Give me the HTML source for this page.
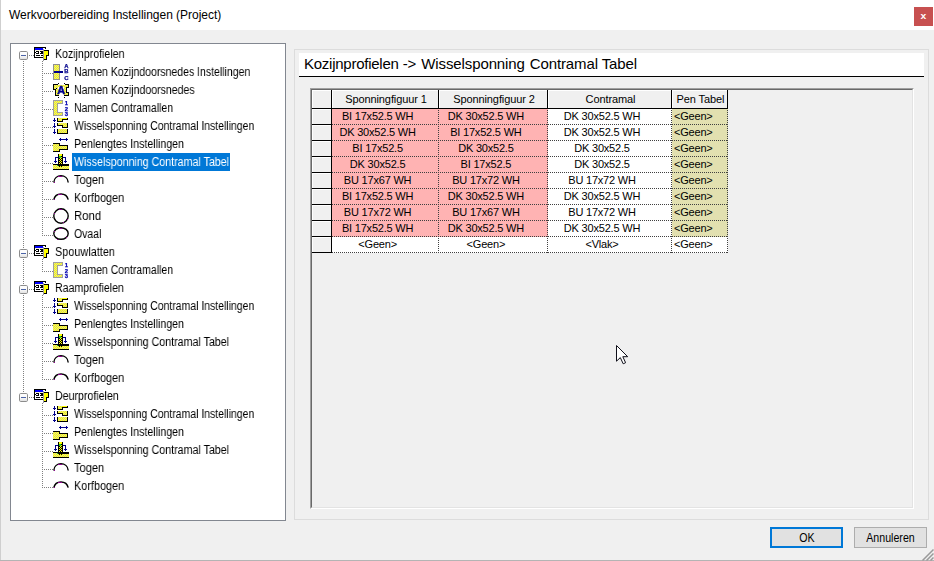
<!DOCTYPE html>
<html lang="nl"><head><meta charset="utf-8"><title>Werkvoorbereiding Instellingen (Project)</title>
<style>

html,body{margin:0;padding:0}
body{width:934px;height:561px;overflow:hidden;background:#f0f0f0;position:relative;font-family:"Liberation Sans",sans-serif;color:#000}
.abs{position:absolute}
#titlebar{left:0;top:0;width:934px;height:30px;background:#fff}
#title{left:9px;top:7px;font-size:12px;line-height:16px;white-space:nowrap;letter-spacing:-0.025px}
#close{left:914px;top:7px;width:19px;height:19px;background:#c75050;color:#fff;font-size:9px;font-weight:bold;line-height:19px;text-align:center}
#tree{left:10px;top:43px;width:274px;height:476px;border:1px solid #828790;background:#fff}
.ti{position:absolute;white-space:nowrap;font-size:12.5px;line-height:18px;height:18px;transform:scaleX(0.835);transform-origin:0 0;will-change:transform}
.sel{position:absolute;background:#0078d7;height:18px}
.ic{position:absolute;width:16px;height:16px;shape-rendering:crispEdges}
#frame{left:294px;top:49px;width:633px;height:469px;border:1px solid #dcdcdc}
#head{left:299px;top:53px;width:625px;height:23px;background:#fff;border-bottom:1px solid #000}
#headtxt{left:304px;top:55px;font-size:15px;line-height:18px;white-space:nowrap;letter-spacing:-0.115px}
#grid{left:310px;top:88px;width:602px;height:419px;background:#f0f0f0;border-style:solid;border-width:1px;border-color:#a0a0a0 #fff #fff #a0a0a0}
#grid2{left:311px;top:89px;width:600px;height:417px;border-style:solid;border-width:1px;border-color:#696969 #e3e3e3 #e3e3e3 #696969}
.gt{position:absolute;font-size:11px;line-height:15px;height:15px;white-space:nowrap}
.btn{position:absolute;box-sizing:border-box;background:#e1e1e1;text-align:center;font-size:12.5px}

</style></head><body>
<div id="titlebar" class="abs"></div>
<div id="title" class="abs">Werkvoorbereiding Instellingen (Project)</div>
<div id="close" class="abs"><span style="display:inline-block;transform:scaleX(1.15)">x</span></div>
<div class="abs" style="left:0;top:0;width:1px;height:561px;background:#cfcfcf"></div>
<div class="abs" style="left:0;top:560px;width:934px;height:1px;background:#b4b4b4"></div>
<div id="tree" class="abs"></div>
<div class="ti" style="left:55px;top:45px;transform:scaleX(0.8475)">Kozijnprofielen</div>
<div class="ti" style="left:74px;top:63px;transform:scaleX(0.8398)">Namen Kozijndoorsnedes Instellingen</div>
<div class="ti" style="left:74px;top:81px;transform:scaleX(0.8421)">Namen Kozijndoorsnedes</div>
<div class="ti" style="left:74px;top:99px;transform:scaleX(0.8384)">Namen Contramallen</div>
<div class="ti" style="left:74px;top:117px;transform:scaleX(0.8369)">Wisselsponning Contramal Instellingen</div>
<div class="ti" style="left:74px;top:135px;transform:scaleX(0.8508)">Penlengtes Instellingen</div>
<div class="sel" style="left:72px;top:153px;width:158px"></div>
<div class="ti" style="left:74px;top:153px;transform:scaleX(0.8527);color:#fff">Wisselsponning Contramal Tabel</div>
<div class="ti" style="left:74px;top:171px;transform:scaleX(0.8857)">Togen</div>
<div class="ti" style="left:74px;top:189px;transform:scaleX(0.8695)">Korfbogen</div>
<div class="ti" style="left:74px;top:207px;transform:scaleX(0.9076)">Rond</div>
<div class="ti" style="left:74px;top:225px;transform:scaleX(0.835)">Ovaal</div>
<div class="ti" style="left:55px;top:243px;transform:scaleX(0.8708)">Spouwlatten</div>
<div class="ti" style="left:74px;top:261px;transform:scaleX(0.8384)">Namen Contramallen</div>
<div class="ti" style="left:55px;top:279px;transform:scaleX(0.8464)">Raamprofielen</div>
<div class="ti" style="left:74px;top:297px;transform:scaleX(0.8369)">Wisselsponning Contramal Instellingen</div>
<div class="ti" style="left:74px;top:315px;transform:scaleX(0.8508)">Penlengtes Instellingen</div>
<div class="ti" style="left:74px;top:333px;transform:scaleX(0.8527)">Wisselsponning Contramal Tabel</div>
<div class="ti" style="left:74px;top:351px;transform:scaleX(0.8857)">Togen</div>
<div class="ti" style="left:74px;top:369px;transform:scaleX(0.8695)">Korfbogen</div>
<div class="ti" style="left:55px;top:387px;transform:scaleX(0.8487)">Deurprofielen</div>
<div class="ti" style="left:74px;top:405px;transform:scaleX(0.8369)">Wisselsponning Contramal Instellingen</div>
<div class="ti" style="left:74px;top:423px;transform:scaleX(0.8508)">Penlengtes Instellingen</div>
<div class="ti" style="left:74px;top:441px;transform:scaleX(0.8527)">Wisselsponning Contramal Tabel</div>
<div class="ti" style="left:74px;top:459px;transform:scaleX(0.8857)">Togen</div>
<div class="ti" style="left:74px;top:477px;transform:scaleX(0.8695)">Korfbogen</div>
<svg class="abs" style="left:0;top:0;shape-rendering:crispEdges" width="300" height="561" viewBox="0 0 300 561"><defs><linearGradient id="eg" x1="0" y1="0" x2="0" y2="1"><stop offset="0" stop-color="#fff"/><stop offset="0.5" stop-color="#fbfbfb"/><stop offset="1" stop-color="#dedede"/></linearGradient><pattern id="h" width="2" height="2" patternUnits="userSpaceOnUse"><rect width="2" height="2" fill="#ffff00"/><rect width="1" height="1" fill="#dcdc9c"/><rect x="1" y="1" width="1" height="1" fill="#dcdc9c"/></pattern><pattern id="hk" width="2" height="2" patternUnits="userSpaceOnUse"><rect width="2" height="2" fill="#ffff00"/><rect width="1" height="1" fill="#000"/><rect x="1" y="1" width="1" height="1" fill="#000"/></pattern></defs><line x1="23.5" y1="61" x2="23.5" y2="249" stroke="#808080" stroke-dasharray="1 1"/><line x1="23.5" y1="259" x2="23.5" y2="285" stroke="#808080" stroke-dasharray="1 1"/><line x1="23.5" y1="295" x2="23.5" y2="393" stroke="#808080" stroke-dasharray="1 1"/><line x1="29" y1="55.5" x2="34" y2="55.5" stroke="#808080" stroke-dasharray="1 1"/><line x1="42.5" y1="61" x2="42.5" y2="236" stroke="#808080" stroke-dasharray="1 1"/><line x1="44" y1="73.5" x2="53" y2="73.5" stroke="#808080" stroke-dasharray="1 1"/><line x1="44" y1="91.5" x2="53" y2="91.5" stroke="#808080" stroke-dasharray="1 1"/><line x1="44" y1="109.5" x2="53" y2="109.5" stroke="#808080" stroke-dasharray="1 1"/><line x1="44" y1="127.5" x2="53" y2="127.5" stroke="#808080" stroke-dasharray="1 1"/><line x1="44" y1="145.5" x2="53" y2="145.5" stroke="#808080" stroke-dasharray="1 1"/><line x1="44" y1="163.5" x2="53" y2="163.5" stroke="#808080" stroke-dasharray="1 1"/><line x1="44" y1="181.5" x2="53" y2="181.5" stroke="#808080" stroke-dasharray="1 1"/><line x1="44" y1="199.5" x2="53" y2="199.5" stroke="#808080" stroke-dasharray="1 1"/><line x1="44" y1="217.5" x2="53" y2="217.5" stroke="#808080" stroke-dasharray="1 1"/><line x1="44" y1="235.5" x2="53" y2="235.5" stroke="#808080" stroke-dasharray="1 1"/><rect x="19.5" y="51.5" width="8" height="8" rx="1.2" fill="url(#eg)" stroke="#8c8c8c" shape-rendering="geometricPrecision"/><rect x="21" y="55" width="5" height="1" fill="#4b63a7"/><line x1="29" y1="253.5" x2="34" y2="253.5" stroke="#808080" stroke-dasharray="1 1"/><line x1="42.5" y1="259" x2="42.5" y2="272" stroke="#808080" stroke-dasharray="1 1"/><line x1="44" y1="271.5" x2="53" y2="271.5" stroke="#808080" stroke-dasharray="1 1"/><rect x="19.5" y="249.5" width="8" height="8" rx="1.2" fill="url(#eg)" stroke="#8c8c8c" shape-rendering="geometricPrecision"/><rect x="21" y="253" width="5" height="1" fill="#4b63a7"/><line x1="29" y1="289.5" x2="34" y2="289.5" stroke="#808080" stroke-dasharray="1 1"/><line x1="42.5" y1="295" x2="42.5" y2="380" stroke="#808080" stroke-dasharray="1 1"/><line x1="44" y1="307.5" x2="53" y2="307.5" stroke="#808080" stroke-dasharray="1 1"/><line x1="44" y1="325.5" x2="53" y2="325.5" stroke="#808080" stroke-dasharray="1 1"/><line x1="44" y1="343.5" x2="53" y2="343.5" stroke="#808080" stroke-dasharray="1 1"/><line x1="44" y1="361.5" x2="53" y2="361.5" stroke="#808080" stroke-dasharray="1 1"/><line x1="44" y1="379.5" x2="53" y2="379.5" stroke="#808080" stroke-dasharray="1 1"/><rect x="19.5" y="285.5" width="8" height="8" rx="1.2" fill="url(#eg)" stroke="#8c8c8c" shape-rendering="geometricPrecision"/><rect x="21" y="289" width="5" height="1" fill="#4b63a7"/><line x1="29" y1="397.5" x2="34" y2="397.5" stroke="#808080" stroke-dasharray="1 1"/><line x1="42.5" y1="403" x2="42.5" y2="488" stroke="#808080" stroke-dasharray="1 1"/><line x1="44" y1="415.5" x2="53" y2="415.5" stroke="#808080" stroke-dasharray="1 1"/><line x1="44" y1="433.5" x2="53" y2="433.5" stroke="#808080" stroke-dasharray="1 1"/><line x1="44" y1="451.5" x2="53" y2="451.5" stroke="#808080" stroke-dasharray="1 1"/><line x1="44" y1="469.5" x2="53" y2="469.5" stroke="#808080" stroke-dasharray="1 1"/><line x1="44" y1="487.5" x2="53" y2="487.5" stroke="#808080" stroke-dasharray="1 1"/><rect x="19.5" y="393.5" width="8" height="8" rx="1.2" fill="url(#eg)" stroke="#8c8c8c" shape-rendering="geometricPrecision"/><rect x="21" y="397" width="5" height="1" fill="#4b63a7"/><g transform="translate(34 46)"><rect x="1" y="4" width="8" height="7" fill="#fff"/><rect x="0" y="1" width="12" height="1" fill="#000"/><rect x="0" y="1" width="1" height="11" fill="#000"/><rect x="0" y="11" width="9" height="1" fill="#000"/><rect x="11" y="1" width="1" height="2" fill="#000"/><rect x="1" y="2" width="9" height="2" fill="#0000ff"/><rect x="1" y="4" width="8" height="1" fill="#f4f0d8"/><rect x="2" y="5" width="3" height="1" fill="#000"/><rect x="6" y="5" width="3" height="1" fill="#000"/><rect x="1" y="6" width="1" height="1" fill="#000"/><rect x="4" y="6" width="1" height="1" fill="#000"/><rect x="7" y="6" width="2" height="1" fill="#000"/><rect x="2" y="7" width="3" height="1" fill="#000"/><rect x="6" y="7" width="3" height="1" fill="#000"/><rect x="2" y="9" width="4" height="1" fill="#000"/><rect x="7" y="9" width="2" height="1" fill="#000"/><rect x="9" y="2" width="1" height="13" fill="#9a9aa0"/><rect x="9" y="2" width="1" height="1" fill="#fff"/><rect x="10" y="5" width="4" height="4" fill="#ffff00"/><rect x="10" y="9" width="2" height="4" fill="#ffff00"/><rect x="10" y="4" width="5" height="1" fill="#000"/><rect x="14" y="4" width="1" height="6" fill="#000"/><rect x="12" y="9" width="3" height="1" fill="#000"/><rect x="12" y="9" width="1" height="5" fill="#000"/><rect x="10" y="13" width="3" height="1" fill="#000"/></g><g transform="translate(53 64)"><rect x="0" y="0" width="7" height="16" fill="#909090"/><rect x="1" y="1" width="5" height="14" fill="url(#h)"/><rect x="1" y="7" width="9" height="2" fill="#00008b"/><text x="11.3" y="4.4" font-size="5.9" font-weight="bold" fill="#00008b" stroke="#00008b" stroke-width="0.25" font-family="Liberation Sans, sans-serif">A</text><text x="11.3" y="9.3" font-size="5.9" font-weight="bold" fill="#00008b" stroke="#00008b" stroke-width="0.25" font-family="Liberation Sans, sans-serif">B</text><text x="11.3" y="15.8" font-size="5.9" font-weight="bold" fill="#00008b" stroke="#00008b" stroke-width="0.25" font-family="Liberation Sans, sans-serif">C</text></g><g transform="translate(53 82)"><rect x="1" y="3" width="4" height="4" fill="url(#h)"/><rect x="3" y="7" width="3" height="6" fill="url(#h)"/><rect x="11" y="3" width="4" height="3" fill="url(#h)"/><rect x="11" y="5" width="2" height="8" fill="url(#h)"/><rect x="13" y="11" width="2" height="2" fill="url(#h)"/><rect x="5" y="3" width="6" height="2" fill="url(#h)"/><text x="4.3" y="12" font-size="10.8" font-weight="bold" fill="#00008b" stroke="#00008b" stroke-width="0.5" font-family="Liberation Sans, sans-serif">A</text><rect x="0" y="2" width="5" height="1" fill="#000"/><rect x="0" y="2" width="1" height="6" fill="#000"/><rect x="0" y="7" width="3" height="1" fill="#000"/><rect x="2" y="7" width="1" height="7" fill="#000"/><rect x="2" y="13" width="4" height="1" fill="#000"/><rect x="12" y="2" width="4" height="1" fill="#000"/><rect x="15" y="2" width="1" height="4" fill="#000"/><rect x="13" y="5" width="3" height="1" fill="#000"/><rect x="13" y="5" width="1" height="6" fill="#000"/><rect x="13" y="10" width="3" height="1" fill="#000"/><rect x="15" y="10" width="1" height="4" fill="#000"/><rect x="11" y="13" width="5" height="1" fill="#000"/><rect x="5" y="1" width="1" height="1" fill="#000"/><rect x="11" y="1" width="1" height="1" fill="#000"/><rect x="5" y="15" width="1" height="1" fill="#000"/><rect x="11" y="15" width="1" height="1" fill="#000"/><rect x="3" y="6" width="1" height="1" fill="#000"/></g><g transform="translate(53 100)"><rect x="0" y="0" width="10" height="16" fill="#a0a0a0"/><rect x="1" y="1" width="8" height="14" fill="url(#h)"/><rect x="4" y="3" width="6" height="10" fill="#a0a0a0"/><rect x="5" y="4" width="5" height="8" fill="#fff"/><text x="11.8" y="5.0" font-size="5.9" font-weight="bold" fill="#0000b0" stroke="#0000b0" stroke-width="0.25" font-family="Liberation Sans, sans-serif">1</text><text x="11.8" y="10.8" font-size="5.9" font-weight="bold" fill="#0000b0" stroke="#0000b0" stroke-width="0.25" font-family="Liberation Sans, sans-serif">2</text><text x="11.8" y="16.2" font-size="5.9" font-weight="bold" fill="#0000b0" stroke="#0000b0" stroke-width="0.25" font-family="Liberation Sans, sans-serif">3</text></g><g transform="translate(53 118)"><rect x="1" y="0" width="1" height="4" fill="#00008b"/><rect x="0" y="2" width="3" height="1" fill="#00008b"/><rect x="1" y="5" width="1" height="5" fill="#00008b"/><rect x="0" y="8" width="3" height="1" fill="#00008b"/><rect x="1" y="11" width="1" height="5" fill="#00008b"/><rect x="0" y="14" width="3" height="1" fill="#00008b"/><rect x="5" y="0" width="4" height="3" fill="url(#h)"/><rect x="9" y="0" width="5" height="1" fill="#ffff00"/><rect x="4" y="0" width="1" height="4" fill="#000"/><rect x="4" y="3" width="6" height="1" fill="#000"/><rect x="9" y="1" width="1" height="3" fill="#000"/><rect x="9" y="1" width="6" height="1" fill="#000"/><rect x="14" y="0" width="1" height="2" fill="#000"/><rect x="5" y="5" width="9" height="2" fill="url(#h)"/><rect x="10" y="7" width="4" height="2" fill="url(#h)"/><rect x="4" y="5" width="1" height="3" fill="#000"/><rect x="4" y="7" width="6" height="1" fill="#000"/><rect x="9" y="7" width="1" height="3" fill="#000"/><rect x="9" y="9" width="6" height="1" fill="#000"/><rect x="14" y="5" width="1" height="5" fill="#000"/><rect x="5" y="11" width="9" height="4" fill="url(#h)"/><rect x="4" y="11" width="1" height="5" fill="#000"/><rect x="4" y="15" width="11" height="1" fill="#000"/><rect x="14" y="11" width="1" height="5" fill="#000"/></g><g transform="translate(53 136)"><rect x="6" y="3" width="9" height="1" fill="#00008b"/><rect x="7" y="2" width="1" height="3" fill="#00008b"/><rect x="13" y="2" width="1" height="3" fill="#00008b"/><rect x="0" y="8" width="6" height="7" fill="url(#h)"/><rect x="6" y="10" width="8" height="3" fill="url(#h)"/><rect x="0" y="7" width="7" height="1" fill="#000"/><rect x="6" y="7" width="1" height="3" fill="#000"/><rect x="6" y="9" width="9" height="1" fill="#000"/><rect x="14" y="9" width="1" height="5" fill="#000"/><rect x="6" y="13" width="9" height="1" fill="#000"/><rect x="6" y="13" width="1" height="3" fill="#000"/><rect x="0" y="15" width="7" height="1" fill="#000"/></g><g transform="translate(53 154)"><rect x="6" y="0" width="3" height="11" fill="url(#hk)"/><rect x="6" y="0" width="3" height="2" fill="#ffff00"/><rect x="6" y="2" width="2" height="2" fill="#20d020"/><rect x="5" y="0" width="1" height="11" fill="#000"/><rect x="9" y="0" width="1" height="11" fill="#000"/><rect x="0" y="11" width="16" height="4" fill="url(#h)"/><rect x="0" y="10" width="16" height="1" fill="#000"/><rect x="10" y="11" width="6" height="1" fill="#000"/><rect x="5" y="11" width="5" height="1" fill="#000"/><rect x="6" y="12" width="1" height="1" fill="#000"/><rect x="8" y="12" width="1" height="1" fill="#000"/><rect x="4" y="11" width="1" height="1" fill="#20d020"/><rect x="0" y="15" width="16" height="1" fill="#000"/><rect x="2" y="3" width="3" height="1" fill="#00008b"/><rect x="2" y="3" width="1" height="6" fill="#00008b"/><rect x="1" y="7" width="3" height="1" fill="#00008b"/><rect x="10" y="3" width="3" height="1" fill="#00008b"/><rect x="12" y="3" width="1" height="6" fill="#00008b"/><rect x="11" y="7" width="3" height="1" fill="#00008b"/></g><g transform="translate(53 172)"><path d="M0.8 10.5 C1.2 1.6 14.8 1.6 15.2 10.5" fill="none" stroke="#000" stroke-width="1.45" shape-rendering="auto"/><rect x="5" y="4" width="4" height="1" fill="#900090"/><rect x="1" y="10" width="1" height="1" fill="#900090"/></g><g transform="translate(53 190)"><path d="M0.8 9.6 C2.5 2 13.5 2 15.2 9.6" fill="none" stroke="#000" stroke-width="1.45" shape-rendering="auto"/><rect x="5" y="4" width="4" height="1" fill="#900090"/><rect x="1" y="9" width="1" height="1" fill="#900090"/></g><g transform="translate(53 208)"><circle cx="8" cy="8" r="7.2" fill="none" stroke="#000" stroke-width="1.4" shape-rendering="auto"/><rect x="6" y="1" width="3" height="1" fill="#900090"/><rect x="1" y="5" width="1" height="1" fill="#900090"/><rect x="14" y="11" width="1" height="1" fill="#900090"/><rect x="10" y="14" width="1" height="1" fill="#900090"/></g><g transform="translate(53 226)"><ellipse cx="8" cy="7.5" rx="7.2" ry="5.8" fill="none" stroke="#000" stroke-width="1.4" shape-rendering="auto"/><rect x="6" y="2" width="3" height="1" fill="#900090"/><rect x="1" y="5" width="1" height="1" fill="#900090"/><rect x="13" y="11" width="1" height="1" fill="#900090"/><rect x="4" y="13" width="1" height="1" fill="#900090"/></g><g transform="translate(34 244)"><rect x="1" y="4" width="8" height="7" fill="#fff"/><rect x="0" y="1" width="12" height="1" fill="#000"/><rect x="0" y="1" width="1" height="11" fill="#000"/><rect x="0" y="11" width="9" height="1" fill="#000"/><rect x="11" y="1" width="1" height="2" fill="#000"/><rect x="1" y="2" width="9" height="2" fill="#0000ff"/><rect x="1" y="4" width="8" height="1" fill="#f4f0d8"/><rect x="2" y="5" width="3" height="1" fill="#000"/><rect x="6" y="5" width="3" height="1" fill="#000"/><rect x="1" y="6" width="1" height="1" fill="#000"/><rect x="4" y="6" width="1" height="1" fill="#000"/><rect x="7" y="6" width="2" height="1" fill="#000"/><rect x="2" y="7" width="3" height="1" fill="#000"/><rect x="6" y="7" width="3" height="1" fill="#000"/><rect x="2" y="9" width="4" height="1" fill="#000"/><rect x="7" y="9" width="2" height="1" fill="#000"/><rect x="9" y="2" width="1" height="13" fill="#9a9aa0"/><rect x="9" y="2" width="1" height="1" fill="#fff"/><rect x="10" y="5" width="4" height="4" fill="#ffff00"/><rect x="10" y="9" width="2" height="4" fill="#ffff00"/><rect x="10" y="4" width="5" height="1" fill="#000"/><rect x="14" y="4" width="1" height="6" fill="#000"/><rect x="12" y="9" width="3" height="1" fill="#000"/><rect x="12" y="9" width="1" height="5" fill="#000"/><rect x="10" y="13" width="3" height="1" fill="#000"/></g><g transform="translate(53 262)"><rect x="0" y="0" width="10" height="16" fill="#a0a0a0"/><rect x="1" y="1" width="8" height="14" fill="url(#h)"/><rect x="4" y="3" width="6" height="10" fill="#a0a0a0"/><rect x="5" y="4" width="5" height="8" fill="#fff"/><text x="11.8" y="5.0" font-size="5.9" font-weight="bold" fill="#0000b0" stroke="#0000b0" stroke-width="0.25" font-family="Liberation Sans, sans-serif">1</text><text x="11.8" y="10.8" font-size="5.9" font-weight="bold" fill="#0000b0" stroke="#0000b0" stroke-width="0.25" font-family="Liberation Sans, sans-serif">2</text><text x="11.8" y="16.2" font-size="5.9" font-weight="bold" fill="#0000b0" stroke="#0000b0" stroke-width="0.25" font-family="Liberation Sans, sans-serif">3</text></g><g transform="translate(34 280)"><rect x="1" y="4" width="8" height="7" fill="#fff"/><rect x="0" y="1" width="12" height="1" fill="#000"/><rect x="0" y="1" width="1" height="11" fill="#000"/><rect x="0" y="11" width="9" height="1" fill="#000"/><rect x="11" y="1" width="1" height="2" fill="#000"/><rect x="1" y="2" width="9" height="2" fill="#0000ff"/><rect x="1" y="4" width="8" height="1" fill="#f4f0d8"/><rect x="2" y="5" width="3" height="1" fill="#000"/><rect x="6" y="5" width="3" height="1" fill="#000"/><rect x="1" y="6" width="1" height="1" fill="#000"/><rect x="4" y="6" width="1" height="1" fill="#000"/><rect x="7" y="6" width="2" height="1" fill="#000"/><rect x="2" y="7" width="3" height="1" fill="#000"/><rect x="6" y="7" width="3" height="1" fill="#000"/><rect x="2" y="9" width="4" height="1" fill="#000"/><rect x="7" y="9" width="2" height="1" fill="#000"/><rect x="9" y="2" width="1" height="13" fill="#9a9aa0"/><rect x="9" y="2" width="1" height="1" fill="#fff"/><rect x="10" y="5" width="4" height="4" fill="#ffff00"/><rect x="10" y="9" width="2" height="4" fill="#ffff00"/><rect x="10" y="4" width="5" height="1" fill="#000"/><rect x="14" y="4" width="1" height="6" fill="#000"/><rect x="12" y="9" width="3" height="1" fill="#000"/><rect x="12" y="9" width="1" height="5" fill="#000"/><rect x="10" y="13" width="3" height="1" fill="#000"/></g><g transform="translate(53 298)"><rect x="1" y="0" width="1" height="4" fill="#00008b"/><rect x="0" y="2" width="3" height="1" fill="#00008b"/><rect x="1" y="5" width="1" height="5" fill="#00008b"/><rect x="0" y="8" width="3" height="1" fill="#00008b"/><rect x="1" y="11" width="1" height="5" fill="#00008b"/><rect x="0" y="14" width="3" height="1" fill="#00008b"/><rect x="5" y="0" width="4" height="3" fill="url(#h)"/><rect x="9" y="0" width="5" height="1" fill="#ffff00"/><rect x="4" y="0" width="1" height="4" fill="#000"/><rect x="4" y="3" width="6" height="1" fill="#000"/><rect x="9" y="1" width="1" height="3" fill="#000"/><rect x="9" y="1" width="6" height="1" fill="#000"/><rect x="14" y="0" width="1" height="2" fill="#000"/><rect x="5" y="5" width="9" height="2" fill="url(#h)"/><rect x="10" y="7" width="4" height="2" fill="url(#h)"/><rect x="4" y="5" width="1" height="3" fill="#000"/><rect x="4" y="7" width="6" height="1" fill="#000"/><rect x="9" y="7" width="1" height="3" fill="#000"/><rect x="9" y="9" width="6" height="1" fill="#000"/><rect x="14" y="5" width="1" height="5" fill="#000"/><rect x="5" y="11" width="9" height="4" fill="url(#h)"/><rect x="4" y="11" width="1" height="5" fill="#000"/><rect x="4" y="15" width="11" height="1" fill="#000"/><rect x="14" y="11" width="1" height="5" fill="#000"/></g><g transform="translate(53 316)"><rect x="6" y="3" width="9" height="1" fill="#00008b"/><rect x="7" y="2" width="1" height="3" fill="#00008b"/><rect x="13" y="2" width="1" height="3" fill="#00008b"/><rect x="0" y="8" width="6" height="7" fill="url(#h)"/><rect x="6" y="10" width="8" height="3" fill="url(#h)"/><rect x="0" y="7" width="7" height="1" fill="#000"/><rect x="6" y="7" width="1" height="3" fill="#000"/><rect x="6" y="9" width="9" height="1" fill="#000"/><rect x="14" y="9" width="1" height="5" fill="#000"/><rect x="6" y="13" width="9" height="1" fill="#000"/><rect x="6" y="13" width="1" height="3" fill="#000"/><rect x="0" y="15" width="7" height="1" fill="#000"/></g><g transform="translate(53 334)"><rect x="6" y="0" width="3" height="11" fill="url(#hk)"/><rect x="6" y="0" width="3" height="2" fill="#ffff00"/><rect x="6" y="2" width="2" height="2" fill="#20d020"/><rect x="5" y="0" width="1" height="11" fill="#000"/><rect x="9" y="0" width="1" height="11" fill="#000"/><rect x="0" y="11" width="16" height="4" fill="url(#h)"/><rect x="0" y="10" width="16" height="1" fill="#000"/><rect x="10" y="11" width="6" height="1" fill="#000"/><rect x="5" y="11" width="5" height="1" fill="#000"/><rect x="6" y="12" width="1" height="1" fill="#000"/><rect x="8" y="12" width="1" height="1" fill="#000"/><rect x="4" y="11" width="1" height="1" fill="#20d020"/><rect x="0" y="15" width="16" height="1" fill="#000"/><rect x="2" y="3" width="3" height="1" fill="#00008b"/><rect x="2" y="3" width="1" height="6" fill="#00008b"/><rect x="1" y="7" width="3" height="1" fill="#00008b"/><rect x="10" y="3" width="3" height="1" fill="#00008b"/><rect x="12" y="3" width="1" height="6" fill="#00008b"/><rect x="11" y="7" width="3" height="1" fill="#00008b"/></g><g transform="translate(53 352)"><path d="M0.8 10.5 C1.2 1.6 14.8 1.6 15.2 10.5" fill="none" stroke="#000" stroke-width="1.45" shape-rendering="auto"/><rect x="5" y="4" width="4" height="1" fill="#900090"/><rect x="1" y="10" width="1" height="1" fill="#900090"/></g><g transform="translate(53 370)"><path d="M0.8 9.6 C2.5 2 13.5 2 15.2 9.6" fill="none" stroke="#000" stroke-width="1.45" shape-rendering="auto"/><rect x="5" y="4" width="4" height="1" fill="#900090"/><rect x="1" y="9" width="1" height="1" fill="#900090"/></g><g transform="translate(34 388)"><rect x="1" y="4" width="8" height="7" fill="#fff"/><rect x="0" y="1" width="12" height="1" fill="#000"/><rect x="0" y="1" width="1" height="11" fill="#000"/><rect x="0" y="11" width="9" height="1" fill="#000"/><rect x="11" y="1" width="1" height="2" fill="#000"/><rect x="1" y="2" width="9" height="2" fill="#0000ff"/><rect x="1" y="4" width="8" height="1" fill="#f4f0d8"/><rect x="2" y="5" width="3" height="1" fill="#000"/><rect x="6" y="5" width="3" height="1" fill="#000"/><rect x="1" y="6" width="1" height="1" fill="#000"/><rect x="4" y="6" width="1" height="1" fill="#000"/><rect x="7" y="6" width="2" height="1" fill="#000"/><rect x="2" y="7" width="3" height="1" fill="#000"/><rect x="6" y="7" width="3" height="1" fill="#000"/><rect x="2" y="9" width="4" height="1" fill="#000"/><rect x="7" y="9" width="2" height="1" fill="#000"/><rect x="9" y="2" width="1" height="13" fill="#9a9aa0"/><rect x="9" y="2" width="1" height="1" fill="#fff"/><rect x="10" y="5" width="4" height="4" fill="#ffff00"/><rect x="10" y="9" width="2" height="4" fill="#ffff00"/><rect x="10" y="4" width="5" height="1" fill="#000"/><rect x="14" y="4" width="1" height="6" fill="#000"/><rect x="12" y="9" width="3" height="1" fill="#000"/><rect x="12" y="9" width="1" height="5" fill="#000"/><rect x="10" y="13" width="3" height="1" fill="#000"/></g><g transform="translate(53 406)"><rect x="1" y="0" width="1" height="4" fill="#00008b"/><rect x="0" y="2" width="3" height="1" fill="#00008b"/><rect x="1" y="5" width="1" height="5" fill="#00008b"/><rect x="0" y="8" width="3" height="1" fill="#00008b"/><rect x="1" y="11" width="1" height="5" fill="#00008b"/><rect x="0" y="14" width="3" height="1" fill="#00008b"/><rect x="5" y="0" width="4" height="3" fill="url(#h)"/><rect x="9" y="0" width="5" height="1" fill="#ffff00"/><rect x="4" y="0" width="1" height="4" fill="#000"/><rect x="4" y="3" width="6" height="1" fill="#000"/><rect x="9" y="1" width="1" height="3" fill="#000"/><rect x="9" y="1" width="6" height="1" fill="#000"/><rect x="14" y="0" width="1" height="2" fill="#000"/><rect x="5" y="5" width="9" height="2" fill="url(#h)"/><rect x="10" y="7" width="4" height="2" fill="url(#h)"/><rect x="4" y="5" width="1" height="3" fill="#000"/><rect x="4" y="7" width="6" height="1" fill="#000"/><rect x="9" y="7" width="1" height="3" fill="#000"/><rect x="9" y="9" width="6" height="1" fill="#000"/><rect x="14" y="5" width="1" height="5" fill="#000"/><rect x="5" y="11" width="9" height="4" fill="url(#h)"/><rect x="4" y="11" width="1" height="5" fill="#000"/><rect x="4" y="15" width="11" height="1" fill="#000"/><rect x="14" y="11" width="1" height="5" fill="#000"/></g><g transform="translate(53 424)"><rect x="6" y="3" width="9" height="1" fill="#00008b"/><rect x="7" y="2" width="1" height="3" fill="#00008b"/><rect x="13" y="2" width="1" height="3" fill="#00008b"/><rect x="0" y="8" width="6" height="7" fill="url(#h)"/><rect x="6" y="10" width="8" height="3" fill="url(#h)"/><rect x="0" y="7" width="7" height="1" fill="#000"/><rect x="6" y="7" width="1" height="3" fill="#000"/><rect x="6" y="9" width="9" height="1" fill="#000"/><rect x="14" y="9" width="1" height="5" fill="#000"/><rect x="6" y="13" width="9" height="1" fill="#000"/><rect x="6" y="13" width="1" height="3" fill="#000"/><rect x="0" y="15" width="7" height="1" fill="#000"/></g><g transform="translate(53 442)"><rect x="6" y="0" width="3" height="11" fill="url(#hk)"/><rect x="6" y="0" width="3" height="2" fill="#ffff00"/><rect x="6" y="2" width="2" height="2" fill="#20d020"/><rect x="5" y="0" width="1" height="11" fill="#000"/><rect x="9" y="0" width="1" height="11" fill="#000"/><rect x="0" y="11" width="16" height="4" fill="url(#h)"/><rect x="0" y="10" width="16" height="1" fill="#000"/><rect x="10" y="11" width="6" height="1" fill="#000"/><rect x="5" y="11" width="5" height="1" fill="#000"/><rect x="6" y="12" width="1" height="1" fill="#000"/><rect x="8" y="12" width="1" height="1" fill="#000"/><rect x="4" y="11" width="1" height="1" fill="#20d020"/><rect x="0" y="15" width="16" height="1" fill="#000"/><rect x="2" y="3" width="3" height="1" fill="#00008b"/><rect x="2" y="3" width="1" height="6" fill="#00008b"/><rect x="1" y="7" width="3" height="1" fill="#00008b"/><rect x="10" y="3" width="3" height="1" fill="#00008b"/><rect x="12" y="3" width="1" height="6" fill="#00008b"/><rect x="11" y="7" width="3" height="1" fill="#00008b"/></g><g transform="translate(53 460)"><path d="M0.8 10.5 C1.2 1.6 14.8 1.6 15.2 10.5" fill="none" stroke="#000" stroke-width="1.45" shape-rendering="auto"/><rect x="5" y="4" width="4" height="1" fill="#900090"/><rect x="1" y="10" width="1" height="1" fill="#900090"/></g><g transform="translate(53 478)"><path d="M0.8 9.6 C2.5 2 13.5 2 15.2 9.6" fill="none" stroke="#000" stroke-width="1.45" shape-rendering="auto"/><rect x="5" y="4" width="4" height="1" fill="#900090"/><rect x="1" y="9" width="1" height="1" fill="#900090"/></g></svg>
<div id="frame" class="abs"></div>
<div id="head" class="abs"></div>
<div id="headtxt" class="abs"><span style="letter-spacing:-0.255px">Kozijnprofielen</span> -&gt; <span style="margin-left:1.1px">Wisselsponning</span><span style="margin-left:0.9px"> Contramal Tabel</span></div>
<div id="grid" class="abs"></div><div id="grid2" class="abs"></div>
<svg class="abs" style="left:0;top:0;shape-rendering:crispEdges" width="934" height="300" viewBox="0 0 934 300"><rect x="332" y="109" width="107" height="16" fill="#ffb3b3"/><rect x="439" y="109" width="109" height="16" fill="#ffb3b3"/><rect x="548" y="109" width="124" height="16" fill="#fff"/><rect x="672" y="109" width="56" height="16" fill="#e2e0b0"/><rect x="332" y="125" width="107" height="16" fill="#ffb3b3"/><rect x="439" y="125" width="109" height="16" fill="#ffb3b3"/><rect x="548" y="125" width="124" height="16" fill="#fff"/><rect x="672" y="125" width="56" height="16" fill="#e2e0b0"/><rect x="332" y="141" width="107" height="16" fill="#ffb3b3"/><rect x="439" y="141" width="109" height="16" fill="#ffb3b3"/><rect x="548" y="141" width="124" height="16" fill="#fff"/><rect x="672" y="141" width="56" height="16" fill="#e2e0b0"/><rect x="332" y="157" width="107" height="16" fill="#ffb3b3"/><rect x="439" y="157" width="109" height="16" fill="#ffb3b3"/><rect x="548" y="157" width="124" height="16" fill="#fff"/><rect x="672" y="157" width="56" height="16" fill="#e2e0b0"/><rect x="332" y="173" width="107" height="16" fill="#ffb3b3"/><rect x="439" y="173" width="109" height="16" fill="#ffb3b3"/><rect x="548" y="173" width="124" height="16" fill="#fff"/><rect x="672" y="173" width="56" height="16" fill="#e2e0b0"/><rect x="332" y="189" width="107" height="16" fill="#ffb3b3"/><rect x="439" y="189" width="109" height="16" fill="#ffb3b3"/><rect x="548" y="189" width="124" height="16" fill="#fff"/><rect x="672" y="189" width="56" height="16" fill="#e2e0b0"/><rect x="332" y="205" width="107" height="16" fill="#ffb3b3"/><rect x="439" y="205" width="109" height="16" fill="#ffb3b3"/><rect x="548" y="205" width="124" height="16" fill="#fff"/><rect x="672" y="205" width="56" height="16" fill="#e2e0b0"/><rect x="332" y="221" width="107" height="16" fill="#ffb3b3"/><rect x="439" y="221" width="109" height="16" fill="#ffb3b3"/><rect x="548" y="221" width="124" height="16" fill="#fff"/><rect x="672" y="221" width="56" height="16" fill="#e2e0b0"/><rect x="332" y="237" width="107" height="16" fill="#fff"/><rect x="439" y="237" width="109" height="16" fill="#fff"/><rect x="548" y="237" width="124" height="16" fill="#fff"/><rect x="672" y="237" width="56" height="16" fill="#fff"/><rect x="312" y="90" width="415" height="1" fill="#fff"/><rect x="312" y="90" width="1" height="18" fill="#fff"/><rect x="332" y="90" width="1" height="18" fill="#fff"/><rect x="439" y="90" width="1" height="18" fill="#fff"/><rect x="548" y="90" width="1" height="18" fill="#fff"/><rect x="672" y="90" width="1" height="18" fill="#fff"/><rect x="312" y="109" width="19" height="1" fill="#fff"/><rect x="312" y="109" width="1" height="15" fill="#fff"/><rect x="312" y="125" width="19" height="1" fill="#fff"/><rect x="312" y="125" width="1" height="15" fill="#fff"/><rect x="312" y="141" width="19" height="1" fill="#fff"/><rect x="312" y="141" width="1" height="15" fill="#fff"/><rect x="312" y="157" width="19" height="1" fill="#fff"/><rect x="312" y="157" width="1" height="15" fill="#fff"/><rect x="312" y="173" width="19" height="1" fill="#fff"/><rect x="312" y="173" width="1" height="15" fill="#fff"/><rect x="312" y="189" width="19" height="1" fill="#fff"/><rect x="312" y="189" width="1" height="15" fill="#fff"/><rect x="312" y="205" width="19" height="1" fill="#fff"/><rect x="312" y="205" width="1" height="15" fill="#fff"/><rect x="312" y="221" width="19" height="1" fill="#fff"/><rect x="312" y="221" width="1" height="15" fill="#fff"/><rect x="312" y="237" width="19" height="1" fill="#fff"/><rect x="312" y="237" width="1" height="15" fill="#fff"/><line x1="332" y1="124.5" x2="728" y2="124.5" stroke="#404040" stroke-dasharray="1 1"/><line x1="332" y1="140.5" x2="728" y2="140.5" stroke="#404040" stroke-dasharray="1 1"/><line x1="332" y1="156.5" x2="728" y2="156.5" stroke="#404040" stroke-dasharray="1 1"/><line x1="332" y1="172.5" x2="728" y2="172.5" stroke="#404040" stroke-dasharray="1 1"/><line x1="332" y1="188.5" x2="728" y2="188.5" stroke="#404040" stroke-dasharray="1 1"/><line x1="332" y1="204.5" x2="728" y2="204.5" stroke="#404040" stroke-dasharray="1 1"/><line x1="332" y1="220.5" x2="728" y2="220.5" stroke="#404040" stroke-dasharray="1 1"/><line x1="332" y1="236.5" x2="728" y2="236.5" stroke="#404040" stroke-dasharray="1 1"/><line x1="332" y1="252.5" x2="728" y2="252.5" stroke="#404040" stroke-dasharray="1 1"/><line x1="438.5" y1="110" x2="438.5" y2="253" stroke="#404040" stroke-dasharray="1 1"/><line x1="547.5" y1="110" x2="547.5" y2="253" stroke="#404040" stroke-dasharray="1 1"/><line x1="671.5" y1="110" x2="671.5" y2="253" stroke="#404040" stroke-dasharray="1 1"/><line x1="727.5" y1="110" x2="727.5" y2="253" stroke="#404040" stroke-dasharray="1 1"/><rect x="312" y="108" width="416" height="1" fill="#000"/><rect x="331" y="90" width="1" height="18" fill="#000"/><rect x="438" y="90" width="1" height="18" fill="#000"/><rect x="547" y="90" width="1" height="18" fill="#000"/><rect x="671" y="90" width="1" height="18" fill="#000"/><rect x="727" y="90" width="1" height="18" fill="#000"/><rect x="331" y="90" width="1" height="163" fill="#000"/><rect x="312" y="124" width="20" height="1" fill="#000"/><rect x="312" y="140" width="20" height="1" fill="#000"/><rect x="312" y="156" width="20" height="1" fill="#000"/><rect x="312" y="172" width="20" height="1" fill="#000"/><rect x="312" y="188" width="20" height="1" fill="#000"/><rect x="312" y="204" width="20" height="1" fill="#000"/><rect x="312" y="220" width="20" height="1" fill="#000"/><rect x="312" y="236" width="20" height="1" fill="#000"/><rect x="312" y="252" width="20" height="1" fill="#000"/></svg>
<div class="gt" style="left:333px;top:92px;width:106px;text-align:center;letter-spacing:-0.1px">Sponningfiguur 1</div>
<div class="gt" style="left:440px;top:92px;width:108px;text-align:center;letter-spacing:-0.1px">Sponningfiguur 2</div>
<div class="gt" style="left:549px;top:92px;width:123px;text-align:center;letter-spacing:-0.1px">Contramal</div>
<div class="gt" style="left:673px;top:92px;width:55px;text-align:center;letter-spacing:-0.1px">Pen Tabel</div>
<div class="gt" style="left:317.6px;top:109px;width:120px;text-align:center;letter-spacing:-0.2px">BI 17x52.5 WH</div>
<div class="gt" style="left:425.9px;top:109px;width:120px;text-align:center;letter-spacing:-0.2px">DK 30x52.5 WH</div>
<div class="gt" style="left:542.0px;top:109px;width:120px;text-align:center;letter-spacing:-0.2px">DK 30x52.5 WH</div>
<div class="gt" style="left:674px;top:109px;letter-spacing:-0.2px">&lt;Geen&gt;</div>
<div class="gt" style="left:317.6px;top:125px;width:120px;text-align:center;letter-spacing:-0.2px">DK 30x52.5 WH</div>
<div class="gt" style="left:425.9px;top:125px;width:120px;text-align:center;letter-spacing:-0.2px">BI 17x52.5 WH</div>
<div class="gt" style="left:542.0px;top:125px;width:120px;text-align:center;letter-spacing:-0.2px">DK 30x52.5 WH</div>
<div class="gt" style="left:674px;top:125px;letter-spacing:-0.2px">&lt;Geen&gt;</div>
<div class="gt" style="left:317.6px;top:141px;width:120px;text-align:center;letter-spacing:-0.2px">BI 17x52.5</div>
<div class="gt" style="left:425.9px;top:141px;width:120px;text-align:center;letter-spacing:-0.2px">DK 30x52.5</div>
<div class="gt" style="left:542.0px;top:141px;width:120px;text-align:center;letter-spacing:-0.2px">DK 30x52.5</div>
<div class="gt" style="left:674px;top:141px;letter-spacing:-0.2px">&lt;Geen&gt;</div>
<div class="gt" style="left:317.6px;top:157px;width:120px;text-align:center;letter-spacing:-0.2px">DK 30x52.5</div>
<div class="gt" style="left:425.9px;top:157px;width:120px;text-align:center;letter-spacing:-0.2px">BI 17x52.5</div>
<div class="gt" style="left:542.0px;top:157px;width:120px;text-align:center;letter-spacing:-0.2px">DK 30x52.5</div>
<div class="gt" style="left:674px;top:157px;letter-spacing:-0.2px">&lt;Geen&gt;</div>
<div class="gt" style="left:317.6px;top:173px;width:120px;text-align:center;letter-spacing:-0.2px">BU 17x67 WH</div>
<div class="gt" style="left:425.9px;top:173px;width:120px;text-align:center;letter-spacing:-0.2px">BU 17x72 WH</div>
<div class="gt" style="left:542.0px;top:173px;width:120px;text-align:center;letter-spacing:-0.2px">BU 17x72 WH</div>
<div class="gt" style="left:674px;top:173px;letter-spacing:-0.2px">&lt;Geen&gt;</div>
<div class="gt" style="left:317.6px;top:189px;width:120px;text-align:center;letter-spacing:-0.2px">BI 17x52.5 WH</div>
<div class="gt" style="left:425.9px;top:189px;width:120px;text-align:center;letter-spacing:-0.2px">DK 30x52.5 WH</div>
<div class="gt" style="left:542.0px;top:189px;width:120px;text-align:center;letter-spacing:-0.2px">DK 30x52.5 WH</div>
<div class="gt" style="left:674px;top:189px;letter-spacing:-0.2px">&lt;Geen&gt;</div>
<div class="gt" style="left:317.6px;top:205px;width:120px;text-align:center;letter-spacing:-0.2px">BU 17x72 WH</div>
<div class="gt" style="left:425.9px;top:205px;width:120px;text-align:center;letter-spacing:-0.2px">BU 17x67 WH</div>
<div class="gt" style="left:542.0px;top:205px;width:120px;text-align:center;letter-spacing:-0.2px">BU 17x72 WH</div>
<div class="gt" style="left:674px;top:205px;letter-spacing:-0.2px">&lt;Geen&gt;</div>
<div class="gt" style="left:317.6px;top:221px;width:120px;text-align:center;letter-spacing:-0.2px">BI 17x52.5 WH</div>
<div class="gt" style="left:425.9px;top:221px;width:120px;text-align:center;letter-spacing:-0.2px">DK 30x52.5 WH</div>
<div class="gt" style="left:542.0px;top:221px;width:120px;text-align:center;letter-spacing:-0.2px">DK 30x52.5 WH</div>
<div class="gt" style="left:674px;top:221px;letter-spacing:-0.2px">&lt;Geen&gt;</div>
<div class="gt" style="left:317.6px;top:237px;width:120px;text-align:center;letter-spacing:-0.2px">&lt;Geen&gt;</div>
<div class="gt" style="left:425.9px;top:237px;width:120px;text-align:center;letter-spacing:-0.2px">&lt;Geen&gt;</div>
<div class="gt" style="left:542.0px;top:237px;width:120px;text-align:center;letter-spacing:-0.2px">&lt;Vlak&gt;</div>
<div class="gt" style="left:674px;top:237px;letter-spacing:-0.2px">&lt;Geen&gt;</div>
<div class="btn" style="left:770px;top:527px;width:73px;height:21px;border:2px solid #0078d7;line-height:19px"><span style="display:inline-block;transform:scaleX(0.85);position:relative;left:1px">OK</span></div>
<div class="btn" style="left:854px;top:527px;width:73px;height:21px;border:1px solid #adadad;line-height:21px"><span style="display:inline-block;transform:scaleX(0.85)">Annuleren</span></div>
<svg class="abs" style="left:921px;top:548px" width="13" height="13" viewBox="0 0 13 13"><path d="M12.5 1.5L1.5 12.5M12.5 5.5L5.5 12.5M12.5 9.5L9.5 12.5" stroke="#9a9a9a" stroke-width="1.5"/></svg>
<svg class="abs" style="left:615px;top:344px" width="14" height="22" viewBox="0 0 14 22"><path d="M1.5 1.5V17.2L5.3 13.6L8.2 19.8L10.6 18.7L7.8 12.7H12.7Z" fill="#fff" stroke="#10101a" stroke-width="1" stroke-linejoin="miter"/></svg>
</body></html>
